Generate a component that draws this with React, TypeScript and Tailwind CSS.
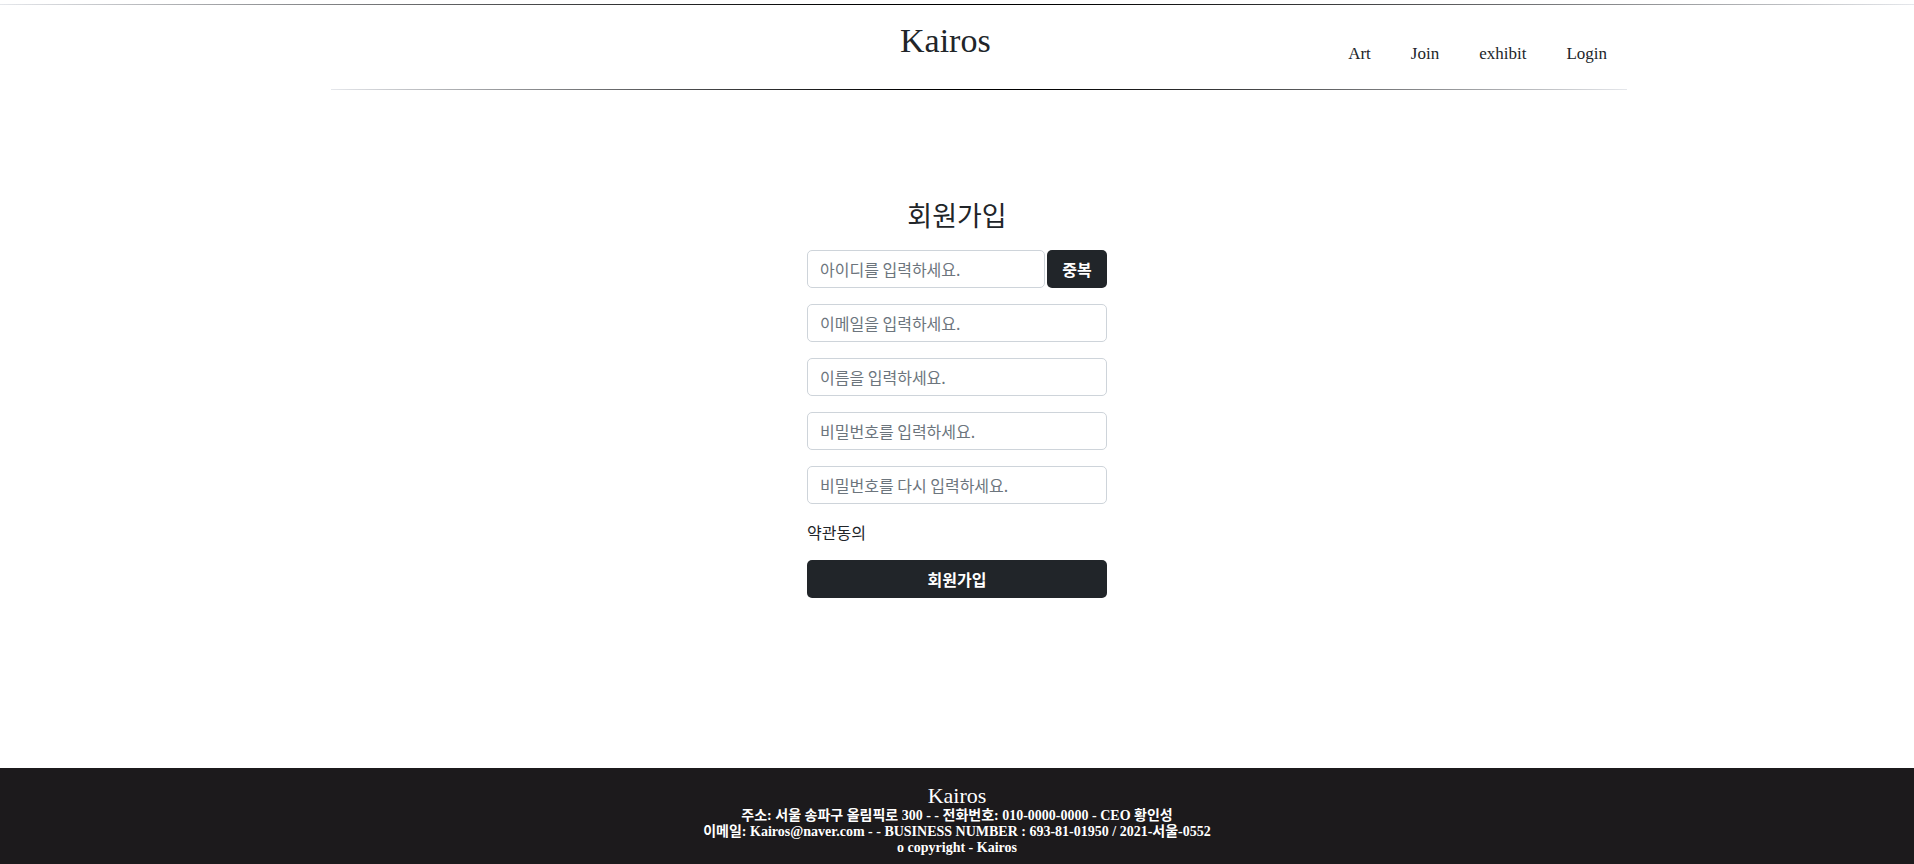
import React from 'react';

const navLinks = [
  { title: 'Art', href: '#art' },
  { title: 'Join', href: '#join' },
  { title: 'exhibit', href: '#exhibit' },
  { title: 'Login', href: '#login' },
];

const fields = [
  { name: 'email', type: 'email', placeholder: '이메일을 입력하세요.' },
  { name: 'name', type: 'text', placeholder: '이름을 입력하세요.' },
  { name: 'password', type: 'password', placeholder: '비밀번호를 입력하세요.' },
  { name: 'passwordCheck', type: 'password', placeholder: '비밀번호를 다시 입력하세요.' },
];

const inputClass =
  "block h-[38px] w-full rounded-[5px] border border-[#ced4da] bg-white px-3 text-[16px] text-[#212529] font-['Noto_Sans_CJK_KR',sans-serif] placeholder:text-[#6c757d] outline-none focus:border-[#86b7fe]";

const Header = () => (
  <>
    <div className="pt-1">
      <div className="h-px bg-gradient-to-r from-gray-200 via-black to-gray-200" />
    </div>
    <div className="mx-auto w-[1340px] pl-[44px]">
      <header className="flex h-[84px] items-start pt-[16px]">
        <a
          href="/"
          className="ml-[569px] text-[34px] leading-[40px] text-[#212529]"
          aria-label="Kairos"
        >
          Kairos
        </a>
        <nav className="ml-auto mt-[21px] flex">
          {navLinks.map(({ title, href }) => (
            <a key={title} href={href} className="px-5 text-[17px] leading-6 text-[#212529]">
              {title}
            </a>
          ))}
        </nav>
      </header>
      <div className="h-px bg-gradient-to-r from-gray-200 via-black to-gray-200" />
    </div>
  </>
);

const JoinForm = () => (
  <form className="mx-auto w-[300px] font-['Noto_Sans_CJK_KR',sans-serif]" onSubmit={(e) => e.preventDefault()}>
    <h2 className="mb-[20px] text-center text-[27px] leading-[31px] text-[#212529]">회원가입</h2>
    <div className="mb-4 flex gap-[2px]">
      <input className={inputClass} type="text" name="id" placeholder="아이디를 입력하세요." />
      <button
        type="button"
        className="h-[38px] w-[60px] shrink-0 rounded-[5px] bg-[#212529] text-[16px] font-bold text-white"
      >
        중복
      </button>
    </div>
    {fields.map((f) => (
      <input key={f.name} className={`${inputClass} mb-4`} type={f.type} name={f.name} placeholder={f.placeholder} />
    ))}
    <p className="text-[16px] leading-6 text-[#212529]">약관동의</p>
    <button
      type="submit"
      className="mt-4 h-[38px] w-full rounded-[5px] bg-[#212529] text-[16px] font-bold text-white"
    >
      회원가입
    </button>
  </form>
);

const Footer = () => (
  <footer className="h-[96px] bg-[#1c1a1c] pt-[16px] text-center text-white">
    <p className="text-[22px] leading-6">Kairos</p>
    <p className="text-[14px] font-semibold leading-4">
      주소: 서울 송파구 올림픽로 300 - - 전화번호: 010-0000-0000 - CEO 황인성
    </p>
    <p className="text-[14px] font-semibold leading-4">
      이메일: Kairos@naver.com - - BUSINESS NUMBER : 693-81-01950 / 2021-서울-0552
    </p>
    <p className="text-[14px] font-semibold leading-4">o copyright - Kairos</p>
  </footer>
);

export default function App() {
  return (
    <div className="flex min-h-screen flex-col bg-white font-['Liberation_Serif','Noto_Sans_CJK_KR',serif]">
      <Header />
      <main className="flex-1 pt-[109px]">
        <JoinForm />
      </main>
      <Footer />
    </div>
  );
}
